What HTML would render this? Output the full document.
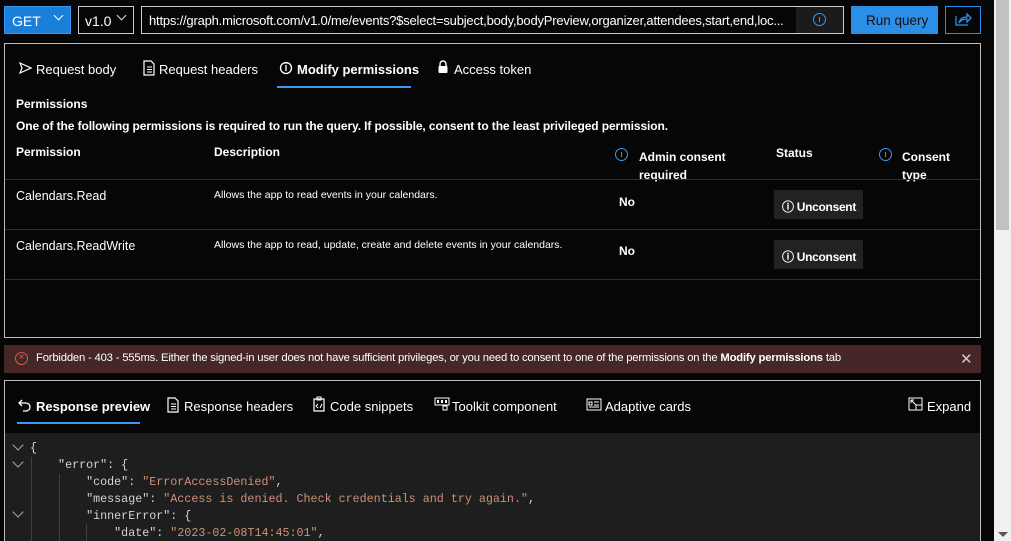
<!DOCTYPE html>
<html><head><meta charset="utf-8"><style>
*{box-sizing:border-box;margin:0;padding:0}
html,body{width:1011px;height:541px;overflow:hidden}
body{background:#060606;color:#fff;font-family:"Liberation Sans",sans-serif;font-size:13px;position:relative}
.a{position:absolute;white-space:nowrap}
.b{font-weight:bold}
.info{display:inline-block;width:13px;height:13px;border:1.3px solid #3a96f0;border-radius:50%;position:relative}
.info:after{content:"";position:absolute;left:4.5px;top:3px;width:1.5px;height:5px;background:#3a96f0}
.line{position:absolute;left:5px;width:975px;height:1px;background:#2e2e2e}
.code{font-family:"Liberation Mono",monospace;font-size:11.7px;color:#d4d4d4}
.s{color:#ce9178}
.chev{position:absolute;left:14px;width:8px;height:8px;border-right:1.3px solid #aaa;border-bottom:1.3px solid #aaa;transform:rotate(45deg)}
.g{position:absolute;width:1px;background:#404040}
.t{font-size:13px}
</style></head><body>
<!-- top bar -->
<div class="a" style="left:4px;top:6px;width:67px;height:28px;background:#1a7fd9;border:1px solid #3a96f0"></div>
<div class="a" style="left:12px;top:13px;font-size:14px">GET</div>
<div class="a" style="left:55px;top:12px;width:7px;height:7px;border-right:1.3px solid #fff;border-bottom:1.3px solid #fff;transform:rotate(45deg)"></div>
<div class="a" style="left:78px;top:6px;width:56px;height:28px;border:1px solid #ccc"></div>
<div class="a" style="left:85px;top:13px;font-size:14px">v1.0</div>
<div class="a" style="left:118px;top:12px;width:7px;height:7px;border-right:1.3px solid #ddd;border-bottom:1.3px solid #ddd;transform:rotate(45deg)"></div>
<div class="a" style="left:141px;top:6px;width:703px;height:28px;border:1px solid #ccc"></div>
<div class="a" style="left:149px;top:13px;font-size:13px;letter-spacing:-0.2px">https://graph.microsoft.com/v1.0/me/events?$select=subject,body,bodyPreview,organizer,attendees,start,end,loc...</div>
<div class="a" style="left:796px;top:7px;width:47px;height:26px;background:#1b1b1b"></div>
<div class="a" style="left:813px;top:13px"><span class="info"></span></div>
<div class="a" style="left:851px;top:6px;width:87px;height:28px;background:#2b8fe8"></div>
<div class="a" style="left:866px;top:13px;color:#111;font-size:13.5px">Run query</div>
<div class="a" style="left:945px;top:6px;width:36px;height:28px;border:1px solid #2b8fe8"></div>
<svg class="a" style="left:954px;top:12px" width="18" height="16"><path d="M2 4v9h12" fill="none" stroke="#2b8fe8" stroke-width="1.3"/><path d="M5 11c1-4 4-6 8-6V2l4 4-4 4V7c-3 0-6 1-8 4z" fill="none" stroke="#2b8fe8" stroke-width="1.3"/></svg>
<!-- scrollbar -->
<div class="a" style="left:994px;top:0;width:17px;height:541px;background:#f0f0f0"></div>
<div class="a" style="left:996px;top:0;width:13px;height:230px;background:#c1c1c1"></div>
<div class="a" style="left:998px;top:532px;width:0;height:0;border-left:5px solid transparent;border-right:5px solid transparent;border-top:5px solid #555"></div>
<!-- request panel -->
<div class="a" style="left:4px;top:43px;width:977px;height:295px;border:1px solid #bbb"></div>
<svg class="a" style="left:18px;top:61px" width="14" height="14"><path d="M2 2l11 5-11 5 2-5z" fill="none" stroke="#fff" stroke-width="1.2"/></svg>
<div class="a t" style="left:36px;top:62px">Request body</div>
<svg class="a" style="left:142px;top:60px" width="14" height="16"><path d="M2 1h7l3 3v11H2z" fill="none" stroke="#fff" stroke-width="1.2"/><path d="M5 7h5M5 9.5h5M5 12h5" stroke="#fff"/></svg>
<div class="a t" style="left:159px;top:62px">Request headers</div>
<svg class="a" style="left:279px;top:60px" width="14" height="15"><circle cx="7" cy="8" r="5.5" fill="none" stroke="#fff" stroke-width="1.3"/><path d="M7 5v6M5 3h4" stroke="#fff" stroke-width="1.3"/></svg>
<div class="a t b" style="left:297px;top:62px">Modify permissions</div>
<div class="a" style="left:277px;top:86px;width:134px;height:2px;background:#3a96f0"></div>
<svg class="a" style="left:437px;top:59px" width="12" height="16"><path d="M3 7V5a3 3 0 016 0v2" fill="none" stroke="#fff" stroke-width="1.4"/><rect x="1.5" y="7" width="9" height="7" rx="1" fill="#fff"/></svg>
<div class="a t" style="left:454px;top:62px">Access token</div>
<div class="a b" style="left:16px;top:97px;font-size:12px">Permissions</div>
<div class="a b" style="left:16px;top:119px;font-size:12px;letter-spacing:-0.1px">One of the following permissions is required to run the query. If possible, consent to the least privileged permission.</div>
<div class="a b" style="left:16px;top:145px;font-size:12px">Permission</div>
<div class="a b" style="left:214px;top:145px;font-size:12px">Description</div>
<div class="a" style="left:615px;top:148px"><span class="info"></span></div>
<div class="a b" style="left:639px;top:148px;font-size:12px;line-height:18px">Admin consent<br>required</div>
<div class="a b" style="left:776px;top:146px;font-size:12px">Status</div>
<div class="a" style="left:879px;top:148px"><span class="info"></span></div>
<div class="a b" style="left:902px;top:148px;font-size:12px;line-height:18px">Consent<br>type</div>
<div class="line" style="top:179px"></div>
<div class="line" style="top:229px"></div>
<div class="line" style="top:279px"></div>
<div class="a" style="left:16px;top:189px;font-size:12.5px">Calendars.Read</div>
<div class="a" style="left:214px;top:189px;font-size:10.5px">Allows the app to read events in your calendars.</div>
<div class="a b" style="left:619px;top:195px;font-size:12px">No</div>
<div class="a" style="left:774px;top:190px;width:89px;height:29px;background:#222"></div>
<div class="a b" style="left:782px;top:198px;font-size:12px;letter-spacing:-0.3px">ⓘ Unconsent</div>
<div class="a" style="left:16px;top:239px;font-size:12.5px">Calendars.ReadWrite</div>
<div class="a" style="left:214px;top:239px;font-size:10.5px">Allows the app to read, update, create and delete events in your calendars.</div>
<div class="a b" style="left:619px;top:244px;font-size:12px">No</div>
<div class="a" style="left:774px;top:240px;width:89px;height:29px;background:#222"></div>
<div class="a b" style="left:782px;top:248px;font-size:12px;letter-spacing:-0.3px">ⓘ Unconsent</div>
<!-- error bar -->
<div class="a" style="left:4px;top:345px;width:977px;height:28px;background:#442726"></div>
<div class="a" style="left:15px;top:352px;width:13px;height:13px;border:1.3px solid #e0564f;border-radius:50%;color:#e0564f;font-size:10px;line-height:10px;text-align:center">×</div>
<div class="a" style="left:36px;top:352px;font-size:11.3px;letter-spacing:-0.2px">Forbidden - 403 - 555ms. Either the signed-in user does not have sufficient privileges, or you need to consent to one of the permissions on the <b>Modify permissions</b> tab</div>
<div class="a" style="left:960px;top:350px;font-size:15px;color:#ccc">✕</div>
<!-- response panel -->
<div class="a" style="left:4px;top:380px;width:977px;height:161px;border:1px solid #bbb;border-bottom:none"></div>
<svg class="a" style="left:18px;top:398px" width="14" height="14"><path d="M4 2L1 5l3 3M1 5h7a4 4 0 010 8H5" fill="none" stroke="#fff" stroke-width="1.3"/></svg>
<div class="a t b" style="left:36px;top:399px">Response preview</div>
<div class="a" style="left:17px;top:422px;width:123px;height:2px;background:#3a96f0"></div>
<svg class="a" style="left:166px;top:397px" width="14" height="16"><path d="M2 1h7l3 3v11H2z" fill="none" stroke="#fff" stroke-width="1.2"/><path d="M5 7h5M5 9.5h5M5 12h5" stroke="#fff"/></svg>
<div class="a t" style="left:184px;top:399px">Response headers</div>
<svg class="a" style="left:312px;top:396px" width="14" height="16"><path d="M2 3h10v12H2z" fill="none" stroke="#fff" stroke-width="1.2"/><path d="M5 1h4v3H5z" fill="none" stroke="#fff"/><path d="M6 8l-2 2 2 2M8 12l2-4" fill="none" stroke="#fff"/></svg>
<div class="a t" style="left:330px;top:399px">Code snippets</div>
<svg class="a" style="left:434px;top:397px" width="16" height="14"><rect x="1" y="1" width="14" height="7" fill="none" stroke="#fff"/><path d="M3 3h2v3H3zM7 3h2v3H7zM11 3h2v3h-2z" fill="#fff"/><rect x="9" y="9" width="4" height="4" fill="none" stroke="#fff"/></svg>
<div class="a t" style="left:452px;top:399px">Toolkit component</div>
<svg class="a" style="left:586px;top:398px" width="16" height="13"><rect x="1" y="1" width="14" height="11" fill="none" stroke="#fff"/><path d="M3 4h3v3H3zM8 4h5M8 7h5M3 9h10" stroke="#fff"/></svg>
<div class="a t" style="left:605px;top:399px">Adaptive cards</div>
<svg class="a" style="left:908px;top:397px" width="15" height="14"><rect x="1" y="1" width="13" height="12" fill="none" stroke="#fff"/><path d="M3 3l5 5M3 3h3M3 3v3" fill="none" stroke="#fff"/><rect x="8" y="8" width="6" height="5" fill="none" stroke="#fff"/></svg>
<div class="a t" style="left:927px;top:399px">Expand</div>
<div class="a" style="left:5px;top:433px;width:975px;height:108px;background:#1e1e1e"></div>
<div class="chev" style="top:441px"></div>
<div class="chev" style="top:458px"></div>
<div class="chev" style="top:508px"></div>
<div class="g" style="left:31px;top:457px;height:84px"></div>
<div class="g" style="left:59px;top:474px;height:67px"></div>
<div class="g" style="left:86px;top:524px;height:17px"></div>
<div class="a code" style="left:30px;top:440px;line-height:17px">{<br>&nbsp;&nbsp;&nbsp;&nbsp;"error": {<br>&nbsp;&nbsp;&nbsp;&nbsp;&nbsp;&nbsp;&nbsp;&nbsp;"code": <span class="s">"ErrorAccessDenied"</span>,<br>&nbsp;&nbsp;&nbsp;&nbsp;&nbsp;&nbsp;&nbsp;&nbsp;"message": <span class="s">"Access is denied. Check credentials and try again."</span>,<br>&nbsp;&nbsp;&nbsp;&nbsp;&nbsp;&nbsp;&nbsp;&nbsp;"innerError": {<br>&nbsp;&nbsp;&nbsp;&nbsp;&nbsp;&nbsp;&nbsp;&nbsp;&nbsp;&nbsp;&nbsp;&nbsp;"date": <span class="s">"2023-02-08T14:45:01"</span>,</div>
</body></html>
